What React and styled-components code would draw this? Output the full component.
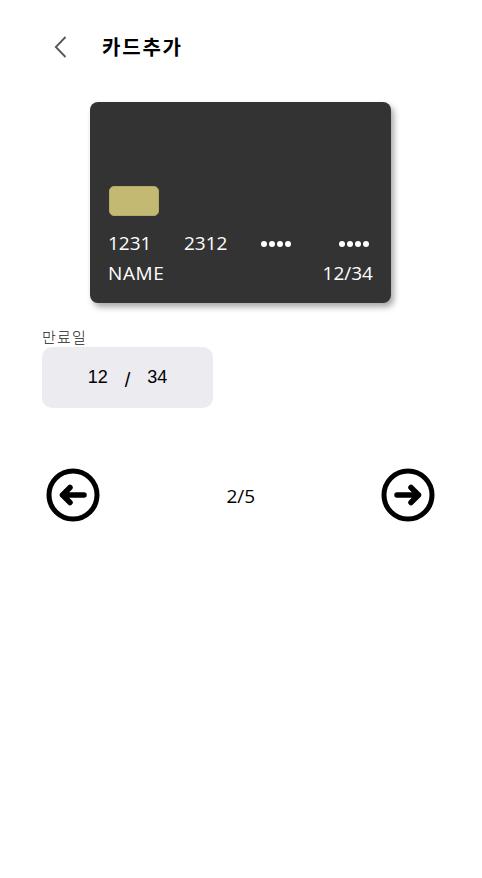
import styled, { createGlobalStyle } from "styled-components";

const GlobalStyle = createGlobalStyle`
  html, body {
    margin: 0;
    padding: 0;
    background: #fff;
  }
  body {
    font-family: "Open Sans", "Noto Sans CJK KR", sans-serif;
    color: #000;
  }
`;

function CircleArrow({ direction }) {
  return (
    <svg width="54" height="54" viewBox="0 0 54 54" fill="none" stroke="#000" strokeLinecap="round" strokeLinejoin="round">
      <circle cx="27" cy="27" r="24" strokeWidth="5" />
      {direction === "left" ? (
        <path d="M38 27H16.5M24 19.5L16.5 27L24 34.5" strokeWidth="5.5" />
      ) : (
        <path d="M16 27H37.5M30 19.5L37.5 27L30 34.5" strokeWidth="5.5" />
      )}
    </svg>
  );
}

function Dots() {
  return (
    <DotGroup>
      <Dot />
      <Dot />
      <Dot />
      <Dot />
    </DotGroup>
  );
}

export default function App() {
  return (
    <>
      <GlobalStyle />
      <Page>
        <Header>
          <BackButton>
            <svg width="16" height="24" viewBox="0 0 16 24" fill="none" stroke="#555" strokeWidth="1.8">
              <path d="M12.5 2L2.8 12L12.5 22" />
            </svg>
          </BackButton>
          <Title>카드추가</Title>
        </Header>

        <Card>
          <Chip />
          <NumberRow>
            <NumberCell>1231</NumberCell>
            <NumberCell>2312</NumberCell>
            <NumberCell>
              <Dots />
            </NumberCell>
            <NumberCell $last>
              <Dots />
            </NumberCell>
          </NumberRow>
          <CardFooter>
            <CardName>NAME</CardName>
            <span>12/34</span>
          </CardFooter>
        </Card>

        <Field>
          <Label>만료일</Label>
          <ExpiryBox>
            <ExpiryInput defaultValue="12" />
            <Slash>/</Slash>
            <ExpiryInput defaultValue="34" />
          </ExpiryBox>
        </Field>

        <Pager>
          <PagerButton>
            <CircleArrow direction="left" />
          </PagerButton>
          <PageCount>2/5</PageCount>
          <PagerButton>
            <CircleArrow direction="right" />
          </PagerButton>
        </Pager>
      </Page>
    </>
  );
}

const Page = styled.div`
  width: 482px;
  height: 878px;
  overflow: hidden;
  display: flex;
  flex-direction: column;
`;

const Header = styled.header`
  height: 94px;
  padding: 0 0 0 53px;
  display: flex;
  align-items: center;
  box-sizing: border-box;
`;

const BackButton = styled.button`
  width: 49px;
  height: 24px;
  padding: 0;
  border: none;
  background: none;
  display: flex;
  align-items: center;
  justify-content: flex-start;
  cursor: pointer;
`;

const Title = styled.h1`
  margin: 0;
  font-size: 20px;
  font-weight: 700;
  letter-spacing: 1.8px;
  line-height: 1;
  font-family: "Noto Sans CJK KR", sans-serif;
`;

const Card = styled.div`
  width: 301px;
  height: 201px;
  margin: 8px 0 0 90px;
  padding: 84px 18px 0;
  box-sizing: border-box;
  background: #333;
  border-radius: 8px;
  box-shadow: 3px 4px 6px rgba(0, 0, 0, 0.35);
  color: #fff;
  font-size: 19px;
  flex-shrink: 0;
`;

const Chip = styled.div`
  width: 50px;
  height: 30px;
  margin-left: 1px;
  box-sizing: border-box;
  background: #c3b973;
  border: 1px solid #b5ab68;
  border-radius: 5px;
`;

const NumberRow = styled.div`
  display: grid;
  grid-template-columns: 76px 77px 76px 1fr;
  height: 25px;
  margin-top: 15px;
  align-items: center;
  line-height: 25px;
`;

const NumberCell = styled.div`
  display: flex;
  justify-content: ${(props) => (props.$last ? "flex-end" : "flex-start")};
  padding-right: ${(props) => (props.$last ? "4px" : "0")};
`;

const DotGroup = styled.div`
  display: flex;
  gap: 2px;
`;

const Dot = styled.i`
  width: 6px;
  height: 6px;
  border-radius: 50%;
  background: #fff;
`;

const CardFooter = styled.div`
  display: flex;
  justify-content: space-between;
  margin-top: 5px;
  line-height: 25px;
`;

const CardName = styled.span`
  letter-spacing: 0.6px;
`;

const Field = styled.div`
  margin: 23px 0 0 42px;
`;

const Label = styled.div`
  font-size: 15px;
  letter-spacing: 1.2px;
  line-height: 21px;
  font-family: "Noto Sans CJK KR", sans-serif;
  font-weight: 300;
  color: #222;
`;

const ExpiryBox = styled.div`
  width: 171px;
  height: 61px;
  background: #ecebf0;
  border-radius: 10px;
  display: flex;
  align-items: center;
  justify-content: center;
  gap: 15px;
`;

const ExpiryInput = styled.input`
  width: 24px;
  padding: 0;
  border: none;
  outline: none;
  background: transparent;
  text-align: center;
  font-family: "Liberation Sans", Arial, sans-serif;
  font-size: 18px;
  color: #000;
`;

const Slash = styled.span`
  font-family: "Liberation Sans", Arial, sans-serif;
  font-size: 20px;
  margin-top: 5px;
`;

const Pager = styled.div`
  margin-top: 60px;
  padding: 0 46.5px 0 46px;
  display: flex;
  align-items: center;
  justify-content: space-between;
`;

const PagerButton = styled.button`
  width: 54px;
  height: 54px;
  padding: 0;
  border: none;
  background: none;
  cursor: pointer;
`;

const PageCount = styled.span`
  font-size: 19px;
  line-height: 25px;
  margin-top: 3px;
`;
